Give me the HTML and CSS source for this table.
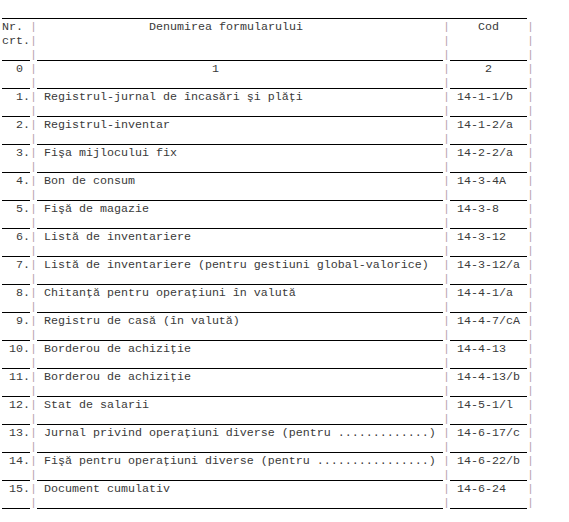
FILE: index.html
```
<!DOCTYPE html>
<html lang="ro">
<head>
<meta charset="utf-8">
<title>Formulare</title>
<link rel="stylesheet" href="styles.css">
</head>
<body>
<div class="sheet">
  <div class="rule"></div>
  <div class="grid">
    <div class="cell num head left">Nr.<br>crt.</div>
    <div class="bar">|<br>|<br>|</div>
    <div class="cell name head title">Denumirea formularului</div>
    <div class="bar">|<br>|<br>|</div>
    <div class="cell code head center">Cod</div>
    <div class="bar">|<br>|<br>|</div>

    <div class="cell num zero">0</div>
    <div class="bar">|<br>|</div>
    <div class="cell name one">1</div>
    <div class="bar">|<br>|</div>
    <div class="cell code center">2</div>
    <div class="bar">|<br>|</div>

    <div class="cell num">1.</div><div class="bar">|<br>|</div>
    <div class="cell name">Registrul-jurnal de încasări şi plăţi</div><div class="bar">|<br>|</div>
    <div class="cell code">14-1-1/b</div><div class="bar">|<br>|</div>

    <div class="cell num">2.</div><div class="bar">|<br>|</div>
    <div class="cell name">Registrul-inventar</div><div class="bar">|<br>|</div>
    <div class="cell code">14-1-2/a</div><div class="bar">|<br>|</div>

    <div class="cell num">3.</div><div class="bar">|<br>|</div>
    <div class="cell name">Fişa mijlocului fix</div><div class="bar">|<br>|</div>
    <div class="cell code">14-2-2/a</div><div class="bar">|<br>|</div>

    <div class="cell num">4.</div><div class="bar">|<br>|</div>
    <div class="cell name">Bon de consum</div><div class="bar">|<br>|</div>
    <div class="cell code">14-3-4A</div><div class="bar">|<br>|</div>

    <div class="cell num">5.</div><div class="bar">|<br>|</div>
    <div class="cell name">Fişă de magazie</div><div class="bar">|<br>|</div>
    <div class="cell code">14-3-8</div><div class="bar">|<br>|</div>

    <div class="cell num">6.</div><div class="bar">|<br>|</div>
    <div class="cell name">Listă de inventariere</div><div class="bar">|<br>|</div>
    <div class="cell code">14-3-12</div><div class="bar">|<br>|</div>

    <div class="cell num">7.</div><div class="bar">|<br>|</div>
    <div class="cell name">Listă de inventariere (pentru gestiuni global-valorice)</div><div class="bar">|<br>|</div>
    <div class="cell code">14-3-12/a</div><div class="bar">|<br>|</div>

    <div class="cell num">8.</div><div class="bar">|<br>|</div>
    <div class="cell name">Chitanţă pentru operaţiuni în valută</div><div class="bar">|<br>|</div>
    <div class="cell code">14-4-1/a</div><div class="bar">|<br>|</div>

    <div class="cell num">9.</div><div class="bar">|<br>|</div>
    <div class="cell name">Registru de casă (în valută)</div><div class="bar">|<br>|</div>
    <div class="cell code">14-4-7/cA</div><div class="bar">|<br>|</div>

    <div class="cell num">10.</div><div class="bar">|<br>|</div>
    <div class="cell name">Borderou de achiziţie</div><div class="bar">|<br>|</div>
    <div class="cell code">14-4-13</div><div class="bar">|<br>|</div>

    <div class="cell num">11.</div><div class="bar">|<br>|</div>
    <div class="cell name">Borderou de achiziţie</div><div class="bar">|<br>|</div>
    <div class="cell code">14-4-13/b</div><div class="bar">|<br>|</div>

    <div class="cell num">12.</div><div class="bar">|<br>|</div>
    <div class="cell name">Stat de salarii</div><div class="bar">|<br>|</div>
    <div class="cell code">14-5-1/l</div><div class="bar">|<br>|</div>

    <div class="cell num">13.</div><div class="bar">|<br>|</div>
    <div class="cell name">Jurnal privind operaţiuni diverse (pentru .............)</div><div class="bar">|<br>|</div>
    <div class="cell code">14-6-17/c</div><div class="bar">|<br>|</div>

    <div class="cell num">14.</div><div class="bar">|<br>|</div>
    <div class="cell name">Fişă pentru operaţiuni diverse (pentru ................)</div><div class="bar">|<br>|</div>
    <div class="cell code">14-6-22/b</div><div class="bar">|<br>|</div>

    <div class="cell num">15.</div><div class="bar">|<br>|</div>
    <div class="cell name">Document cumulativ</div><div class="bar">|<br>|</div>
    <div class="cell code">14-6-24</div><div class="bar">|<br>|</div>
  </div>
</div>
</body>
</html>
```

FILE: styles.css
```
html, body {
  margin: 0;
  padding: 0;
  background: #ffffff;
}

.sheet {
  margin: 5px 0 0 2px;
  font-family: "Liberation Mono", "Courier New", monospace;
  font-size: 11.667px;
  line-height: 14px;
  color: #3a3a3a;
}

.rule {
  width: 525px;
  height: 14px;
  box-sizing: border-box;
  border-bottom: 1px solid #000000;
}

.grid {
  display: grid;
  grid-template-columns: 28px 7px 406px 7px 77px 7px;
  grid-template-rows: 42px;
  grid-auto-rows: 28px;
  width: 532px;
}

.cell {
  padding-top: 1px;
  box-sizing: border-box;
  border-bottom: 1px solid #000000;
  white-space: pre;
  overflow: hidden;
}

.num {
  text-align: right;
}

.num.left {
  text-align: left;
}

.num.zero {
  padding-right: 7px;
}

.name {
  padding-left: 7px;
}

.name.title {
  padding-left: 112px;
}

.name.one {
  padding-left: 175px;
}

.code {
  padding-left: 7px;
}

.code.center {
  padding-left: 0;
  text-align: center;
}

.bar {
  padding-top: 1px;
  box-sizing: border-box;
  overflow: hidden;
  color: #b9a5b0;
  text-align: center;
}
```
